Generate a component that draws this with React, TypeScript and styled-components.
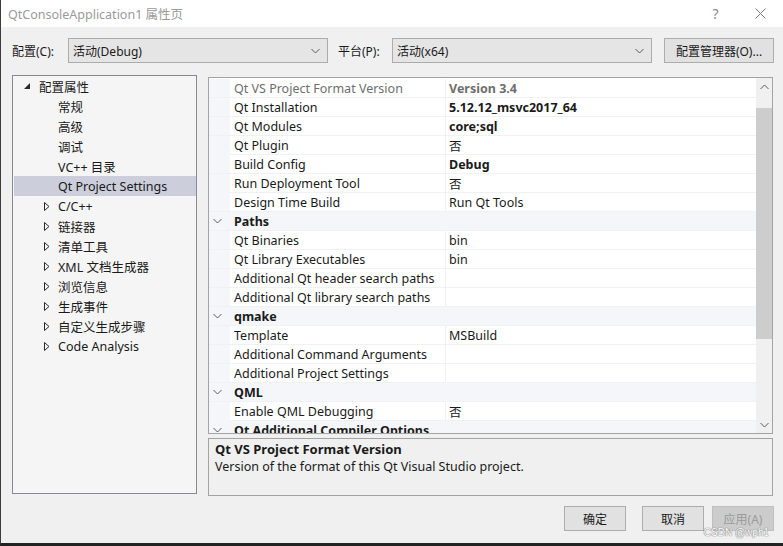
import styled, { createGlobalStyle } from "styled-components";

const GlobalStyle = createGlobalStyle`
  html, body {
    margin: 0;
    padding: 0;
    background: #f0f0f0;
  }
  * {
    box-sizing: border-box;
  }
`;

const Window = styled.div`
  position: relative;
  width: 783px;
  height: 546px;
  display: flex;
  flex-direction: column;
  background: #f0f0f0;
  border-left: 1px solid #3c3c3c;
  border-bottom: 3px solid #222;
  font-family: "Noto Sans", "Noto Sans CJK SC", sans-serif;
  font-size: 12.5px;
  color: #1a1a1a;
  overflow: hidden;
`;

const TitleBar = styled.div`
  height: 27px;
  flex-shrink: 0;
  display: flex;
  align-items: center;
  background: #fff;
  padding-left: 7px;
`;

const TitleText = styled.span`
  flex: 1;
  color: #9a9a9a;
  font-size: 12.5px;
`;

const TitleButton = styled.div`
  width: 45px;
  height: 27px;
  display: flex;
  align-items: center;
  justify-content: center;
  color: #8a8a8a;
  font-size: 14px;
`;

const ConfigRow = styled.div`
  display: flex;
  align-items: center;
  height: 25px;
  margin-top: 11px;
  padding-left: 11px;
  flex-shrink: 0;
`;

const FieldLabel = styled.span<{ $width: number; $offset?: number }>`
  width: ${(p) => p.$width}px;
  margin-left: ${(p) => p.$offset ?? 0}px;
  font-size: 12px;
`;

const Combo = styled.div`
  width: 260px;
  height: 25px;
  display: flex;
  align-items: center;
  justify-content: space-between;
  padding: 0 7px 0 4px;
  background: #e5e5e5;
  border: 1px solid #acacac;
  font-size: 12px;
`;

const PushButton = styled.div<{ $width: number; $offset?: number; $disabled?: boolean }>`
  width: ${(p) => p.$width}px;
  height: 25px;
  margin-left: ${(p) => p.$offset ?? 0}px;
  display: flex;
  align-items: center;
  justify-content: center;
  background: ${(p) => (p.$disabled ? "#cccccc" : "#e1e1e1")};
  border: 1px solid ${(p) => (p.$disabled ? "#bfbfbf" : "#adadad")};
  color: ${(p) => (p.$disabled ? "#9a9a9a" : "#1a1a1a")};
  font-size: 12px;
`;

const Main = styled.div`
  display: flex;
  height: 421px;
  margin-top: 12px;
  padding-left: 11px;
  flex-shrink: 0;
`;

const Tree = styled.div`
  width: 185px;
  height: 419px;
  background: #f5f5f5;
  border: 1px solid #878a92;
  padding: 0 0 0 1px;
`;

const TreeRow = styled.div<{ $level: number; $selected?: boolean }>`
  height: 20px;
  display: flex;
  align-items: center;
  padding-left: ${(p) => (p.$level === 0 ? 7 : 27)}px;
  background: ${(p) => (p.$selected ? "#cccedb" : "transparent")};
  white-space: nowrap;
`;

const TreeArrow = styled.span<{ $level: number }>`
  width: ${(p) => (p.$level === 0 ? 18 : 17)}px;
  display: flex;
  align-items: center;
  padding-left: 3px;
`;

const RightColumn = styled.div`
  width: 565px;
  margin-left: 11px;
  padding-top: 2px;
  display: flex;
  flex-direction: column;
  gap: 4px;
`;

const Grid = styled.div`
  height: 357px;
  display: flex;
  background: #fff;
  border: 1px solid #a3a3a3;
`;

const Rows = styled.div`
  flex: 1;
  overflow: hidden;
  padding-top: 1px;
`;

const PropRow = styled.div<{ $category?: boolean }>`
  height: 19px;
  display: grid;
  grid-template-columns: 21px 215px 1fr;
  align-items: stretch;
  background: ${(p) => (p.$category ? "#f4f6f9" : "#fff")};
  border-bottom: 1px solid #eff1f4;
  white-space: nowrap;
`;

const Gutter = styled.div`
  background: #f4f6f9;
  display: flex;
  align-items: center;
  padding-left: 4px;
`;

const NameCell = styled.div<{ $muted?: boolean; $bold?: boolean }>`
  display: flex;
  align-items: center;
  padding-left: 4px;
  color: ${(p) => (p.$muted ? "#6e6e6e" : "#1a1a1a")};
  font-weight: ${(p) => (p.$bold ? 700 : 400)};
  overflow: ${(p) => (p.$bold ? "visible" : "hidden")};
`;

const ValueCell = styled.div<{ $muted?: boolean; $bold?: boolean; $category?: boolean }>`
  display: flex;
  align-items: center;
  padding-left: 3px;
  border-left: 1px solid ${(p) => (p.$category ? "transparent" : "#eff1f4")};
  color: ${(p) => (p.$muted ? "#6e6e6e" : "#1a1a1a")};
  font-weight: ${(p) => (p.$bold ? 700 : 400)};
`;

const Scrollbar = styled.div`
  width: 16px;
  display: flex;
  flex-direction: column;
  background: #f0f0f0;
`;

const ScrollArrow = styled.div`
  height: 17px;
  display: flex;
  align-items: center;
  justify-content: center;
`;

const ScrollTrack = styled.div`
  flex: 1;
`;

const ScrollThumb = styled.div<{ $top: number; $height: number }>`
  margin-top: ${(p) => p.$top}px;
  height: ${(p) => p.$height}px;
  background: #cdcdcd;
`;

const Description = styled.div`
  height: 58px;
  border: 1px solid #a3a3a3;
  background: #f0f0f0;
  padding: 1px 6px 0;
  line-height: 18px;
`;

const DescTitle = styled.div`
  font-weight: 700;
  font-size: 13px;
`;

const ButtonRow = styled.div`
  display: flex;
  justify-content: flex-end;
  margin-top: 10px;
  padding-right: 9px;
  flex-shrink: 0;
`;

const Watermark = styled.div`
  position: absolute;
  right: 14px;
  bottom: 5px;
  font-family: "Liberation Sans", sans-serif;
  font-size: 10px;
  color: #fff;
  text-shadow: 0 0 1px #888, 0 0 1px #888, 0 0 1px #888;
`;

const Chevron = ({ up }: { up?: boolean }) => (
  <svg width="9" height="6" viewBox="0 0 9 6">
    <polyline
      points={up ? "0.5,5 4.5,1 8.5,5" : "0.5,1 4.5,5 8.5,1"}
      fill="none"
      stroke="#5a5a5a"
      strokeWidth="1"
    />
  </svg>
);

const ExpandedArrow = () => (
  <svg width="6" height="6" viewBox="0 0 6 6">
    <polygon points="6,0 6,6 0,6" fill="#2a2a2a" />
  </svg>
);

const CollapsedArrow = () => (
  <svg width="6" height="9" viewBox="0 0 6 9">
    <polygon points="0.5,0.5 5,4.5 0.5,8.5" fill="none" stroke="#2a2a2a" strokeWidth="1" />
  </svg>
);

const CloseIcon = () => (
  <svg width="11" height="11" viewBox="0 0 11 11">
    <path d="M0.5 0.5 L10.5 10.5 M10.5 0.5 L0.5 10.5" stroke="#7a7a7a" strokeWidth="1" />
  </svg>
);

type TreeItem = { label: string; level: number; arrow?: "open" | "closed"; selected?: boolean };

const treeItems: TreeItem[] = [
  { label: "配置属性", level: 0, arrow: "open" },
  { label: "常规", level: 1 },
  { label: "高级", level: 1 },
  { label: "调试", level: 1 },
  { label: "VC++ 目录", level: 1 },
  { label: "Qt Project Settings", level: 1, selected: true },
  { label: "C/C++", level: 1, arrow: "closed" },
  { label: "链接器", level: 1, arrow: "closed" },
  { label: "清单工具", level: 1, arrow: "closed" },
  { label: "XML 文档生成器", level: 1, arrow: "closed" },
  { label: "浏览信息", level: 1, arrow: "closed" },
  { label: "生成事件", level: 1, arrow: "closed" },
  { label: "自定义生成步骤", level: 1, arrow: "closed" },
  { label: "Code Analysis", level: 1, arrow: "closed" },
];

type Prop =
  | { kind: "cat"; name: string }
  | { kind: "prop"; name: string; value?: string; bold?: boolean; muted?: boolean };

const props: Prop[] = [
  { kind: "prop", name: "Qt VS Project Format Version", value: "Version 3.4", bold: true, muted: true },
  { kind: "prop", name: "Qt Installation", value: "5.12.12_msvc2017_64", bold: true },
  { kind: "prop", name: "Qt Modules", value: "core;sql", bold: true },
  { kind: "prop", name: "Qt Plugin", value: "否" },
  { kind: "prop", name: "Build Config", value: "Debug", bold: true },
  { kind: "prop", name: "Run Deployment Tool", value: "否" },
  { kind: "prop", name: "Design Time Build", value: "Run Qt Tools" },
  { kind: "cat", name: "Paths" },
  { kind: "prop", name: "Qt Binaries", value: "bin" },
  { kind: "prop", name: "Qt Library Executables", value: "bin" },
  { kind: "prop", name: "Additional Qt header search paths" },
  { kind: "prop", name: "Additional Qt library search paths" },
  { kind: "cat", name: "qmake" },
  { kind: "prop", name: "Template", value: "MSBuild" },
  { kind: "prop", name: "Additional Command Arguments" },
  { kind: "prop", name: "Additional Project Settings" },
  { kind: "cat", name: "QML" },
  { kind: "prop", name: "Enable QML Debugging", value: "否" },
  { kind: "cat", name: "Qt Additional Compiler Options" },
];

export default function App() {
  return (
    <>
      <GlobalStyle />
      <Window>
        <TitleBar>
          <TitleText>QtConsoleApplication1 属性页</TitleText>
          <TitleButton>?</TitleButton>
          <TitleButton>
            <CloseIcon />
          </TitleButton>
        </TitleBar>

        <ConfigRow>
          <FieldLabel $width={56}>配置(C):</FieldLabel>
          <Combo>
            <span>活动(Debug)</span>
            <Chevron />
          </Combo>
          <FieldLabel $width={54} $offset={10}>
            平台(P):
          </FieldLabel>
          <Combo>
            <span>活动(x64)</span>
            <Chevron />
          </Combo>
          <PushButton $width={110} $offset={12}>
            配置管理器(O)...
          </PushButton>
        </ConfigRow>

        <Main>
          <Tree>
            {treeItems.map((item) => (
              <TreeRow key={item.label} $level={item.level} $selected={item.selected}>
                <TreeArrow $level={item.level}>
                  {item.arrow === "open" && <ExpandedArrow />}
                  {item.arrow === "closed" && <CollapsedArrow />}
                </TreeArrow>
                {item.label}
              </TreeRow>
            ))}
          </Tree>

          <RightColumn>
            <Grid>
              <Rows>
                {props.map((p) =>
                  p.kind === "cat" ? (
                    <PropRow key={p.name} $category>
                      <Gutter>
                        <Chevron />
                      </Gutter>
                      <NameCell $bold>{p.name}</NameCell>
                      <ValueCell $category />
                    </PropRow>
                  ) : (
                    <PropRow key={p.name}>
                      <Gutter />
                      <NameCell $muted={p.muted}>{p.name}</NameCell>
                      <ValueCell $muted={p.muted} $bold={p.bold}>
                        {p.value}
                      </ValueCell>
                    </PropRow>
                  )
                )}
              </Rows>
              <Scrollbar>
                <ScrollArrow>
                  <Chevron up />
                </ScrollArrow>
                <ScrollTrack>
                  <ScrollThumb $top={13} $height={231} />
                </ScrollTrack>
                <ScrollArrow>
                  <Chevron />
                </ScrollArrow>
              </Scrollbar>
            </Grid>
            <Description>
              <DescTitle>Qt VS Project Format Version</DescTitle>
              <div>Version of the format of this Qt Visual Studio project.</div>
            </Description>
          </RightColumn>
        </Main>

        <ButtonRow>
          <PushButton $width={62}>确定</PushButton>
          <PushButton $width={62} $offset={16}>
            取消
          </PushButton>
          <PushButton $width={62} $offset={8} $disabled>
            应用(A)
          </PushButton>
        </ButtonRow>

        <Watermark>CSDN @wph1</Watermark>
      </Window>
    </>
  );
}
